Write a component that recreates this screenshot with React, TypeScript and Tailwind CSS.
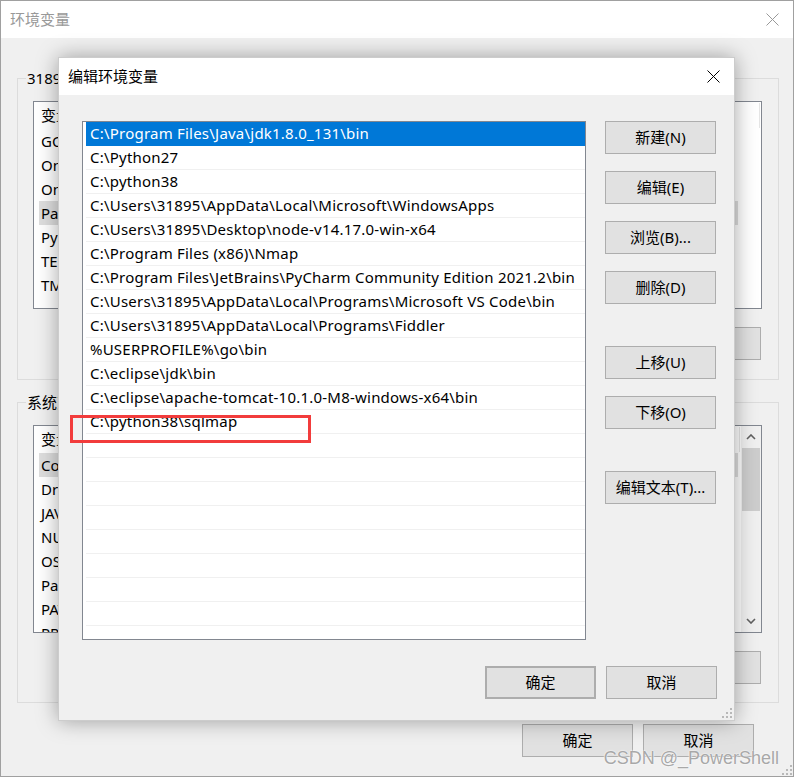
import React from "react";

const font = "font-['Noto_Sans','Noto_Sans_CJK_SC',sans-serif]";

function XIcon({ color }: { color: string }) {
  return (
    <svg width="13" height="13" viewBox="0 0 13 13">
      <path d="M0.5 0.5 L12.5 12.5 M12.5 0.5 L0.5 12.5" stroke={color} strokeWidth="1" fill="none" />
    </svg>
  );
}

function Grip() {
  const dots = [
    [8, 0],
    [4, 4],
    [8, 4],
    [0, 8],
    [4, 8],
    [8, 8],
  ];
  return (
    <svg width="10" height="10">
      {dots.map(([x, y], i) => (
        <rect key={i} x={x} y={y} width="2" height="2" fill="#b8b8b8" />
      ))}
    </svg>
  );
}

function Btn({ children, className = "" }: { children?: React.ReactNode; className?: string }) {
  return (
    <div
      className={`h-[33px] w-[111px] shrink-0 flex items-center justify-center bg-[#e1e1e1] border border-[#adadad] text-[15px] text-black ${className}`}
    >
      {children}
    </div>
  );
}

function Chevron({ up }: { up: boolean }) {
  return (
    <svg width="10" height="6" viewBox="0 0 10 6">
      <path d={up ? "M1 5 L5 1 L9 5" : "M1 1 L5 5 L9 1"} stroke="#606060" strokeWidth="1.6" fill="none" />
    </svg>
  );
}

function BgList({ rows, selected, scroll }: { rows: string[]; selected: number; scroll?: boolean }) {
  return (
    <div className="w-[729px] h-[208px] border border-[#828790] bg-white overflow-hidden flex">
      <div className="flex-1 flex flex-col">
        <div className="h-[27px] shrink-0 flex items-center text-[15px] text-black">
          <span className="pl-[7px] w-[240px]">变量</span>
          <span className="flex-1">值</span>
          <span className="w-[1px] h-[25px] bg-[#e5e5e5] mr-[1px]" />
        </div>
        <div className="pl-[5px] flex flex-col">
          {rows.map((r, i) => (
            <div
              key={i}
              className={`h-[24px] w-[699px] shrink-0 flex items-center pl-[2px] text-[15px] text-black ${i === selected ? "bg-[#dedede]" : ""}`}
            >
              {r}
            </div>
          ))}
        </div>
      </div>
      {scroll && (
        <div className="w-[20px] shrink-0 bg-[#f0f0f0] flex flex-col">
          <div className="h-[22px] flex items-center justify-center">
            <Chevron up />
          </div>
          <div className="h-[63px] mx-[1px] bg-[#cdcdcd]" />
          <div className="flex-1" />
          <div className="h-[22px] flex items-center justify-center">
            <Chevron up={false} />
          </div>
        </div>
      )}
    </div>
  );
}

function Group({
  title,
  rows,
  selected,
  scroll,
  height,
}: {
  title: string;
  rows: string[];
  selected: number;
  scroll?: boolean;
  height: string;
}) {
  return (
    <div className={`relative w-[762px] ${height} border border-[#dcdcdc] pl-[15px] pt-[22px]`}>
      <span className="absolute left-[8px] top-[-11px] px-[1px] bg-[#f0f0f0] text-[15px] leading-[20px] text-black">
        {title}
      </span>
      <BgList rows={rows} selected={selected} scroll={scroll} />
      <div className="w-[728px] mt-[18px] flex justify-end gap-[10px]">
        <Btn>新建(N)...</Btn>
        <Btn>编辑(E)...</Btn>
        <Btn>删除(D)</Btn>
      </div>
    </div>
  );
}

const paths = [
  "C:\\Program Files\\Java\\jdk1.8.0_131\\bin",
  "C:\\Python27",
  "C:\\python38",
  "C:\\Users\\31895\\AppData\\Local\\Microsoft\\WindowsApps",
  "C:\\Users\\31895\\Desktop\\node-v14.17.0-win-x64",
  "C:\\Program Files (x86)\\Nmap",
  "C:\\Program Files\\JetBrains\\PyCharm Community Edition 2021.2\\bin",
  "C:\\Users\\31895\\AppData\\Local\\Programs\\Microsoft VS Code\\bin",
  "C:\\Users\\31895\\AppData\\Local\\Programs\\Fiddler",
  "%USERPROFILE%\\go\\bin",
  "C:\\eclipse\\jdk\\bin",
  "C:\\eclipse\\apache-tomcat-10.1.0-M8-windows-x64\\bin",
  "C:\\python38\\sqlmap",
];

const allRows = [...paths, ...Array(9).fill("")];

export default function App() {
  return (
    <div className={`relative w-[794px] h-[777px] overflow-hidden bg-[#f0f0f0] border border-[#a0a0a0] ${font}`}>
      {/* background window */}
      <div className="h-[37px] bg-white flex items-center justify-between pl-[9px] pr-[14px]">
        <span className="text-[15px] text-[#999999]">环境变量</span>
        <XIcon color="#999999" />
      </div>
      <div className="pl-[16px] pt-[40px]">
        <Group
          title="31895 的用户变量(U)"
          height="h-[302px]"
          rows={["GOPATH", "OneDrive", "OneDriveConsumer", "Path", "PyCharm Community Edition", "TEMP", "TMP"]}
          selected={3}
        />
        <div className="mt-[22px]">
          <Group
            title="系统变量(S)"
            height="h-[301px]"
            rows={["ComSpec", "DriverData", "JAVA_HOME", "NUMBER_OF_PROCESSORS", "OS", "Path", "PATHEXT", "PROCESSOR_ARCHITECTURE"]}
            selected={0}
            scroll
          />
        </div>
        <div className="w-[737px] mt-[21px] flex justify-end gap-[10px]">
          <Btn>确定</Btn>
          <Btn>取消</Btn>
        </div>
      </div>
      <div className="absolute right-[1px] bottom-[1px]">
        <Grip />
      </div>
      <div className="absolute right-[14px] top-[746px] text-[18px] leading-[22px] font-['Liberation_Sans',sans-serif] text-[#a8a8a8] [text-shadow:0_0_1px_#ffffff,0_0_2px_#ffffff]">
        CSDN @_PowerShell
      </div>

      {/* foreground dialog */}
      <div className="absolute left-[57px] top-[56px] w-[677px] h-[664px] bg-[#f0f0f0] border border-[#cccccc] shadow-[0_0_20px_rgba(0,0,0,0.35)] flex flex-col">
        <div className="h-[37px] shrink-0 bg-white flex items-center justify-between pl-[9px] pr-[14px]">
          <span className="text-[15px] text-black">编辑环境变量</span>
          <XIcon color="#000000" />
        </div>
        <div className="flex pl-[23px] pt-[26px] gap-[19px]">
          <div className="w-[504px] h-[519px] shrink-0 border border-[#828790] bg-white overflow-hidden pl-[3px] flex flex-col">
            {allRows.map((r, i) => (
              <div
                key={i}
                className={`h-[24px] shrink-0 flex items-center pl-[4px] text-[15px] tracking-[0.22px] whitespace-nowrap border-b ${
                  i === 0 ? "bg-[#0078d7] text-white border-[#0078d7]" : "text-black border-[#f0f0f0]"
                }`}
              >
                {r}
              </div>
            ))}
          </div>
          <div className="flex flex-col">
            <Btn>新建(N)</Btn>
            <Btn className="mt-[17px]">编辑(E)</Btn>
            <Btn className="mt-[17px]">浏览(B)...</Btn>
            <Btn className="mt-[17px]">删除(D)</Btn>
            <Btn className="mt-[42px]">上移(U)</Btn>
            <Btn className="mt-[17px]">下移(O)</Btn>
            <Btn className="mt-[42px]">编辑文本(T)...</Btn>
          </div>
        </div>
        <div className="flex justify-end gap-[10px] pr-[17px] mt-[26px]">
          <Btn className="border-2 border-[#0078d7]">确定</Btn>
          <Btn>取消</Btn>
        </div>
        <div className="absolute left-[11px] top-[357px] w-[241px] h-[28px] border-[3px] border-[#f23c3c]" />
        <div className="absolute right-[2px] bottom-[2px]">
          <Grip />
        </div>
      </div>
    </div>
  );
}
